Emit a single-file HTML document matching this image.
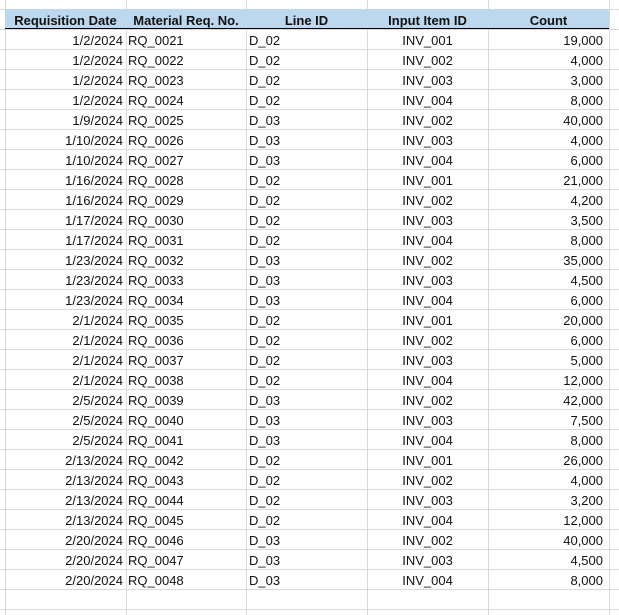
<!DOCTYPE html><html><head><style>
body{margin:0;background:#fff;width:619px;height:615px;overflow:hidden;position:relative;font-family:"Liberation Sans",sans-serif;font-size:13px;color:#111}
.g{position:absolute;background:#d9d9d9}
.hdr{position:absolute;left:5px;top:9px;width:604px;height:20px;background:#bdd7ee;border-bottom:1px solid #000;box-sizing:border-box}
.c{position:absolute;height:20px;line-height:20px;white-space:nowrap;margin-top:2px}
.h{font-weight:bold;text-align:center}
</style></head><body>
<div id="grid"></div>
<div class="hdr"></div>
<div id="cells"></div>
<script>
var g=document.getElementById('grid'),h='';
var xs=[5,126,246,367,488,609];
xs.forEach(function(x){h+='<div class="g" style="left:'+x+'px;top:0;width:1px;height:615px"></div>'});
for(var y=9;y<615;y+=20){h+='<div class="g" style="left:0;top:'+y+'px;width:619px;height:1px"></div>'}
g.innerHTML=h;
var d=[["1/2/2024","0021","D_02","INV_001","19,000"],["1/2/2024","0022","D_02","INV_002","4,000"],["1/2/2024","0023","D_02","INV_003","3,000"],["1/2/2024","0024","D_02","INV_004","8,000"],["1/9/2024","0025","D_03","INV_002","40,000"],["1/10/2024","0026","D_03","INV_003","4,000"],["1/10/2024","0027","D_03","INV_004","6,000"],["1/16/2024","0028","D_02","INV_001","21,000"],["1/16/2024","0029","D_02","INV_002","4,200"],["1/17/2024","0030","D_02","INV_003","3,500"],["1/17/2024","0031","D_02","INV_004","8,000"],["1/23/2024","0032","D_03","INV_002","35,000"],["1/23/2024","0033","D_03","INV_003","4,500"],["1/23/2024","0034","D_03","INV_004","6,000"],["2/1/2024","0035","D_02","INV_001","20,000"],["2/1/2024","0036","D_02","INV_002","6,000"],["2/1/2024","0037","D_02","INV_003","5,000"],["2/1/2024","0038","D_02","INV_004","12,000"],["2/5/2024","0039","D_03","INV_002","42,000"],["2/5/2024","0040","D_03","INV_003","7,500"],["2/5/2024","0041","D_03","INV_004","8,000"],["2/13/2024","0042","D_02","INV_001","26,000"],["2/13/2024","0043","D_02","INV_002","4,000"],["2/13/2024","0044","D_02","INV_003","3,200"],["2/13/2024","0045","D_02","INV_004","12,000"],["2/20/2024","0046","D_03","INV_002","40,000"],["2/20/2024","0047","D_03","INV_003","4,500"],["2/20/2024","0048","D_03","INV_004","8,000"]];
var s='';
var hd=["Requisition Date","Material Req. No.","Line ID","Input Item ID","Count"];
hd.forEach(function(t,i){s+='<div class="c h" style="top:9px;left:'+xs[i]+'px;width:'+(xs[i+1]-xs[i])+'px">'+t+'</div>'});
d.forEach(function(r,k){var y=29+k*20;
s+='<div class="c" style="top:'+y+'px;left:5px;width:118px;text-align:right">'+r[0]+'</div>';
s+='<div class="c" style="top:'+y+'px;left:128px">RQ_'+r[1]+'</div>';
s+='<div class="c" style="top:'+y+'px;left:249px">'+r[2]+'</div>';
s+='<div class="c" style="top:'+y+'px;left:367px;width:121px;text-align:center">'+r[3]+'</div>';
s+='<div class="c" style="top:'+y+'px;left:488px;width:115px;text-align:right">'+r[4]+'</div>';});
document.getElementById('cells').innerHTML=s;
</script>
</body></html>
